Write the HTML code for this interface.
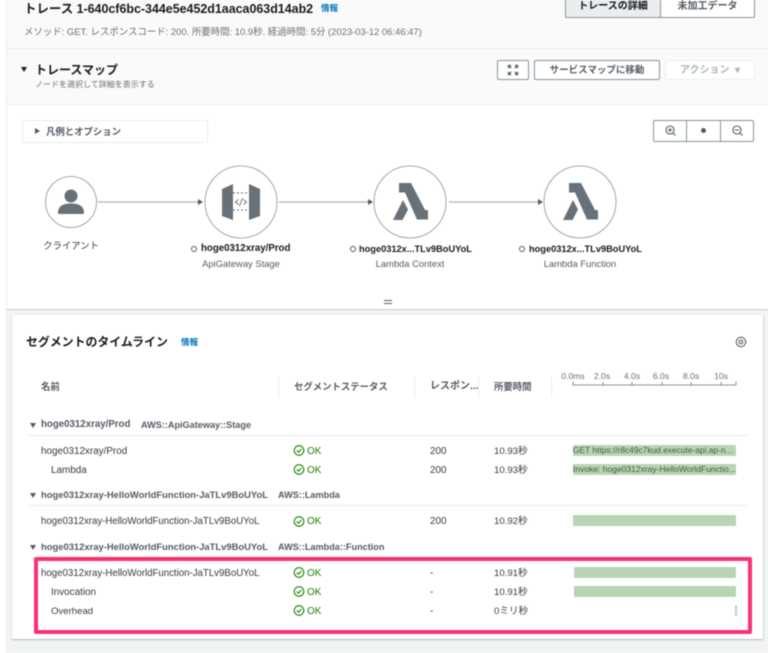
<!DOCTYPE html>
<html lang="ja"><head><meta charset="utf-8"><title>トレース</title>
<style>
html,body{margin:0;padding:0;background:#fff}
#p{position:relative;width:768px;height:653px;overflow:hidden;background:#fff;font-family:"Liberation Sans","Noto Sans CJK JP",sans-serif;color:#16191f;filter:blur(.4px)}
.a{position:absolute;box-sizing:border-box}
.t{position:absolute;white-space:nowrap;line-height:16px;font-size:9.9px;color:#333a42}
.b{font-weight:700;color:#16191f}
.c{transform:translateX(-50%)}
.g{font-weight:700;color:#545b64;font-size:9.42px}
.h{font-weight:700;color:#545b64;font-size:9.4px}
.long{font-size:9.66px}
.ok{color:#1d8102;font-size:10px}
.btn{position:absolute;box-sizing:border-box;background:#fff;border:1px solid #879596;border-radius:2px;font-size:10px;font-weight:700;color:#545b64;text-align:center;white-space:nowrap}
.bar{position:absolute;background:#b9d4b5;border-radius:1px;font-size:8.4px;line-height:11px;color:#3d5a3a;white-space:nowrap;overflow:hidden}
.ln{position:absolute;background:#eaeded;height:1px;left:26px;width:723px}
.sep{position:absolute;top:377px;width:1px;height:21px;background:#eaeded}
.tick{position:absolute;top:370px;font-size:8.6px;line-height:12px;color:#687078;transform:translateX(-50%);white-space:nowrap}
svg{position:absolute;overflow:visible}
</style></head><body><div id="p">
<div class="a" style="left:6px;top:0;width:762px;height:105px;background:#fafafa;border-left:1px solid #eaeded"></div>
<div class="a" style="left:7px;top:48px;width:761px;height:1px;background:#eaeded"></div>
<div class="a" style="left:7px;top:104px;width:761px;height:1px;background:#eaeded"></div>
<div class="a" style="left:6px;top:105px;width:1px;height:205px;background:#eaeded"></div>

<div class="t b" style="left:24px;top:0.500px;font-size:12.450px">トレース 1-640cf6bc-344e5e452d1aaca063d14ab2</div>
<div class="t" style="left:321px;top:0;font-size:8.5px;font-weight:700;color:#0073bb">情報</div>
<div class="t" style="left:24px;top:23.500px;font-size:9.430px;color:#687078">メソッド: GET. レスポンスコード: 200. 所要時間: 10.9秒. 経過時間: 5分 (2023-03-12 06:46:47)</div>

<div class="btn" style="left:565px;top:-5px;width:96px;height:23px;line-height:22px;background:#eaeded;color:#16191f;border-radius:0 0 0 2px">トレースの詳細</div>
<div class="btn" style="left:660px;top:-5px;width:95px;height:23px;line-height:22px;border-radius:0 0 2px 0">未加工データ</div>

<div class="a" style="left:20.500px;top:67px;width:0;height:0;border-left:3px solid transparent;border-right:3px solid transparent;border-top:5px solid #16191f"></div>
<div class="t b" style="left:35px;top:62px;font-size:12px">トレースマップ</div>
<div class="t" style="left:35px;top:77px;font-size:8px;color:#687078">ノードを選択して詳細を表示する</div>

<div class="btn" style="left:497px;top:60px;width:32px;height:20px"></div>
<svg style="left:508px;top:65px" width="10" height="10" viewBox="0 0 11 11" fill="none" stroke="#545b64" stroke-width="1.4"><path d="M0.5 3.5V.5H3.5M7.5.5h3v3M10.5 7.500v3h-3M3.500 10.500h-3v-3M1 1l2.500 2.500M10 1 7.500 3.500M10 10 7.500 7.500M1 10l2.500-2.500"/></svg>
<div class="btn" style="left:534px;top:60px;width:126px;height:20px;line-height:19px;font-size:9.5px">サービスマップに移動</div>
<div class="btn" style="left:665px;top:60px;width:90px;height:20px;line-height:19px;border-color:#eaeded;color:#aab7b8">アクション &nbsp;<span style="font-size:10px">▾</span></div>

<div class="a" style="left:22px;top:120px;width:186px;height:23px;background:#fff;border:1px solid #eaeded"></div>
<div class="a" style="left:35px;top:128px;width:0;height:0;border-top:3.500px solid transparent;border-bottom:3.500px solid transparent;border-left:5px solid #545b64"></div>
<div class="t" style="left:46px;top:124px;font-size:9.400px;font-weight:700;color:#545b64">凡例とオプション</div>

<div class="btn" style="left:653px;top:120px;width:34px;height:22px;border-radius:2px 0 0 2px"></div>
<div class="btn" style="left:686px;top:120px;width:35px;height:22px;border-radius:0"></div>
<div class="btn" style="left:720px;top:120px;width:34px;height:22px;border-radius:0 2px 2px 0"></div>
<svg style="left:665px;top:125px" width="11" height="11" viewBox="0 0 11 11" fill="none" stroke="#545b64" stroke-width="1.1"><circle cx="5" cy="5" r="4"/><path d="M8 8l2.500 2.500M3 5h4M5 3v4"/></svg>
<div class="a" style="left:701px;top:128px;width:5px;height:5px;border-radius:50%;background:#545b64"></div>
<svg style="left:732px;top:125px" width="11" height="11" viewBox="0 0 11 11" fill="none" stroke="#545b64" stroke-width="1.1"><circle cx="5" cy="5" r="4"/><path d="M8 8l2.500 2.500M3 5h4"/></svg>

<!-- map -->
<svg style="left:0;top:0" width="768" height="320" viewBox="0 0 768 320">
<g stroke="#aab7b8" stroke-width="1.200"><path d="M98 202h101"/><path d="M279 202h89"/><path d="M449 202h89"/></g>
<g fill="#545b64"><path d="M198 199v6l5-3zM368 199v6l5-3zM538 199v6l5-3z"/></g>
<g fill="#fff" stroke="#879596" stroke-width=".8"><circle cx="71" cy="202" r="25.500"/><circle cx="241" cy="202" r="36"/><circle cx="410" cy="202" r="36"/><circle cx="580" cy="202" r="36"/></g>
<g fill="#687078">
<circle cx="71" cy="196" r="6.500"/><path d="M58 213c0-7 5-9.500 13-9.500s13 2.500 13 9.500c0 .5-.5 1-1 1H59c-.5 0-1-.5-1-1z"/>
<path d="M222 189l11-5v36l-11-4zM260 189l-11-5v36l11-4z"/>
<path d="M399 183h12l14 27h2l1 .500v9h-11L405 192.500h-6zM393 220l10-20 5 9.500-5.500 10.500z"/>
<path d="M569 183h12l14 27h2l1 .500v9h-11L575 192.500h-6zM563 220l10-20 5 9.500-5.500 10.500z"/>
</g>
<g stroke="#687078" stroke-width="1" fill="none"><path d="M233 193h16M233 210h16" stroke-dasharray="2 2"/><path d="M238.500 199.500 235.500 202l3 2.500M243.500 199.500l3 2.500-3 2.500M242.500 198l-3 8"/></g>
</svg>
<div class="t c" style="left:71px;top:238px;font-size:9.400px;color:#333a42">クライアント</div>

<div class="a" style="left:191px;top:246px;width:6px;height:6px;border:1px solid #545b64;border-radius:50%"></div>
<div class="t" style="left:201px;top:241px;font-size:9.700px;font-weight:700;color:#16191f">hoge0312xray/Prod</div>
<div class="t c" style="left:241px;top:256px;font-size:9.400px;color:#545b64">ApiGateway Stage</div>

<div class="a" style="left:350px;top:246px;width:6px;height:6px;border:1px solid #545b64;border-radius:50%"></div>
<div class="t" style="left:359px;top:241px;font-size:9.260px;font-weight:700;color:#16191f">hoge0312x...TLv9BoUYoL</div>
<div class="t c" style="left:410px;top:256px;font-size:9.400px;color:#545b64">Lambda Context</div>

<div class="a" style="left:519px;top:246px;width:6px;height:6px;border:1px solid #545b64;border-radius:50%"></div>
<div class="t" style="left:529px;top:241px;font-size:9.260px;font-weight:700;color:#16191f">hoge0312x...TLv9BoUYoL</div>
<div class="t c" style="left:580px;top:256px;font-size:9.400px;color:#545b64">Lambda Function</div>

<div class="a" style="left:384px;top:300px;width:8px;height:1px;background:#545b64"></div>
<div class="a" style="left:384px;top:303px;width:8px;height:1px;background:#545b64"></div>

<!-- lower -->
<div class="a" style="left:6px;top:309px;width:762px;height:344px;background:#f2f3f3;border-top:1px solid #c4cbcc;border-left:1px solid #eaeded"></div>
<div class="a" style="left:12px;top:315px;width:751px;height:324px;background:#fff;box-shadow:0 1px 1px #aab7b8,1px 0 1px #d5dbdb,-1px 0 1px #eaeded"></div>

<div class="t b" style="left:26px;top:334px;font-size:11.900px">セグメントのタイムライン</div>
<div class="t" style="left:181px;top:334px;font-size:8.500px;font-weight:700;color:#0073bb">情報</div>
<svg style="left:735px;top:336px" width="12" height="12" viewBox="0 0 12 12" fill="none" stroke="#545b64"><circle cx="6" cy="6" r="4.700" stroke-width="1.300" stroke-dasharray="2.200 .5"/><circle cx="6" cy="6" r="1.800" stroke-width="1.100"/></svg>

<div class="t h" style="left:41px;top:379px">名前</div>
<div class="t h" style="left:294px;top:379px">セグメントステータス</div>
<div class="t h" style="left:430px;top:379px;font-size:10px">レスポン...</div>
<div class="t h" style="left:494px;top:379px">所要時間</div>
<div class="sep" style="left:278px"></div><div class="sep" style="left:414px"></div><div class="sep" style="left:478px"></div><div class="sep" style="left:551px"></div>

<div class="tick" style="left:573px">0.0ms</div><div class="tick" style="left:602px">2.0s</div><div class="tick" style="left:632px">4.0s</div><div class="tick" style="left:661px">6.0s</div><div class="tick" style="left:691px">8.0s</div><div class="tick" style="left:721px">10s</div>
<svg style="left:0;top:0" width="768" height="400" viewBox="0 0 768 400"><path d="M573 381.500v3.500h163v-3.500M603 382v3M632 382v3M662 382v3M691 382v3M721 382v3" fill="none" stroke="#687078" stroke-width=".8"/></svg>

<div class="a" style="left:29.500px;top:423px;width:0;height:0;border-left:3px solid transparent;border-right:3px solid transparent;border-top:5px solid #545b64"></div>
<div class="t g" style="left:41px;top:417px;font-size:9.700px">hoge0312xray/Prod</div>
<div class="t g" style="left:141px;top:417px;font-size:9.150px">AWS::ApiGateway::Stage</div>
<div class="ln" style="top:435px"></div>
<div class="t" style="left:41px;top:444px">hoge0312xray/Prod</div>
<div class="t" style="left:51px;top:463px">Lambda</div>

<div class="a" style="left:29.500px;top:493px;width:0;height:0;border-left:3px solid transparent;border-right:3px solid transparent;border-top:5px solid #545b64"></div>
<div class="t g" style="left:41px;top:487px">hoge0312xray-HelloWorldFunction-JaTLv9BoUYoL</div>
<div class="t g" style="left:278px;top:487px;font-size:9.150px">AWS::Lambda</div>
<div class="ln" style="top:505px"></div>
<div class="t long" style="left:41px;top:514px">hoge0312xray-HelloWorldFunction-JaTLv9BoUYoL</div>

<div class="a" style="left:29.500px;top:545px;width:0;height:0;border-left:3px solid transparent;border-right:3px solid transparent;border-top:5px solid #545b64"></div>
<div class="t g" style="left:41px;top:539px">hoge0312xray-HelloWorldFunction-JaTLv9BoUYoL</div>
<div class="t g" style="left:278px;top:539px;font-size:9.150px">AWS::Lambda::Function</div>
<div class="t long" style="left:41px;top:566px">hoge0312xray-HelloWorldFunction-JaTLv9BoUYoL</div>
<div class="t" style="left:51px;top:585px">Invocation</div>
<div class="t" style="left:51px;top:604px;font-size:9.600px">Overhead</div>

<svg style="left:0;top:0" width="768" height="653" viewBox="0 0 768 653" fill="none" stroke="#1d8102" stroke-width="1.100">
<g id="k"><circle cx="299" cy="450.500" r="4.800"/><path d="M296.700 450.500l1.700 1.700 3-3.200"/></g>
<use href="#k" y="19"/><use href="#k" y="71"/><use href="#k" y="122"/><use href="#k" y="141"/><use href="#k" y="160"/>
</svg>
<div class="t ok" style="left:307px;top:444px">OK</div>
<div class="t ok" style="left:307px;top:463px">OK</div>
<div class="t ok" style="left:307px;top:514px">OK</div>
<div class="t ok" style="left:307px;top:566px">OK</div>
<div class="t ok" style="left:307px;top:585px">OK</div>
<div class="t ok" style="left:307px;top:604px">OK</div>

<div class="t" style="left:430px;top:444px">200</div><div class="t" style="left:430px;top:463px">200</div><div class="t" style="left:430px;top:514px">200</div>
<div class="t" style="left:430px;top:566px">-</div><div class="t" style="left:430px;top:585px">-</div><div class="t" style="left:430px;top:604px">-</div>
<div class="t" style="left:494px;top:444px;font-size:9.600px">10.93秒</div><div class="t" style="left:494px;top:463px;font-size:9.600px">10.93秒</div><div class="t" style="left:494px;top:514px;font-size:9.600px">10.92秒</div>
<div class="t" style="left:494px;top:566px;font-size:9.600px">10.91秒</div><div class="t" style="left:494px;top:585px;font-size:9.600px">10.91秒</div><div class="t" style="left:494px;top:604px;font-size:9.600px">0ミリ秒</div>

<div class="bar" style="left:573px;top:445px;width:163px;height:11px">GET https://r8c49c7kud.execute-api.ap-n...</div>
<div class="bar" style="left:573px;top:464px;width:163px;height:11px;font-size:8.500px">Invoke: hoge0312xray-HelloWorldFunctio...</div>
<div class="bar" style="left:573px;top:515px;width:163px;height:11px"></div>
<div class="bar" style="left:573.500px;top:567px;width:162.500px;height:11px"></div>
<div class="bar" style="left:573.500px;top:586px;width:162.500px;height:11px"></div>
<div class="bar" style="left:735px;top:605px;width:2px;height:11px"></div>

<div class="a" style="left:34px;top:557px;width:718px;height:77px;border:4px solid #f8316f;border-radius:2px"></div>
</div></body></html>
